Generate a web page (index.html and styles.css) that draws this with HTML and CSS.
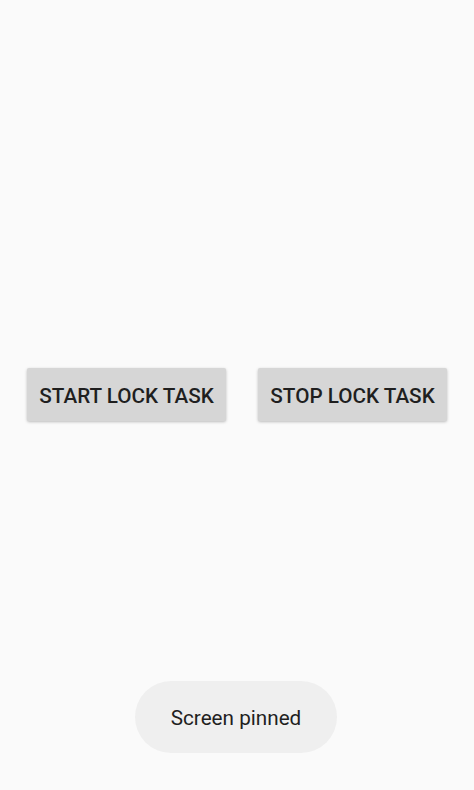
FILE: index.html
```html
<!DOCTYPE html>
<html>
<head>
<meta charset="utf-8">
<link rel="stylesheet" href="styles.css">
</head>
<body>
<div class="screen">
  <div class="row">
    <button class="btn btn-start">START LOCK TASK</button>
    <button class="btn btn-stop">STOP LOCK TASK</button>
  </div>
  <div class="toast">Screen pinned</div>
</div>
</body>
</html>
```
FILE: styles.css
```css
html, body {
  margin: 0;
  padding: 0;
  background: #fafafa;
}
.screen {
  width: 474px;
  height: 790px;
  display: flex;
  flex-direction: column;
  font-family: Roboto, "Noto Sans", sans-serif;
}
.row {
  display: flex;
  padding-top: 368px;
  padding-left: 27px;
  gap: 32px;
}
.btn {
  height: 53px;
  border: none;
  border-radius: 2px;
  background: #d6d6d6;
  color: #1f1f1f;
  font-family: Roboto, "Noto Sans", sans-serif;
  font-weight: 500;
  font-size: 20.7px;
  padding: 3px 0 0 0;
  box-shadow: 0 1px 3px rgba(0,0,0,0.25);
}
.btn-start { width: 199px; }
.btn-stop { width: 189px; }
.toast {
  margin-top: auto;
  margin-bottom: 37px;
  margin-left: 135px;
  width: 202px;
  height: 72px;
  box-sizing: border-box;
  padding-top: 2px;
  border-radius: 36px;
  background: #efefef;
  color: #1f1f1f;
  font-size: 20.7px;
  display: flex;
  align-items: center;
  justify-content: center;
}
```
